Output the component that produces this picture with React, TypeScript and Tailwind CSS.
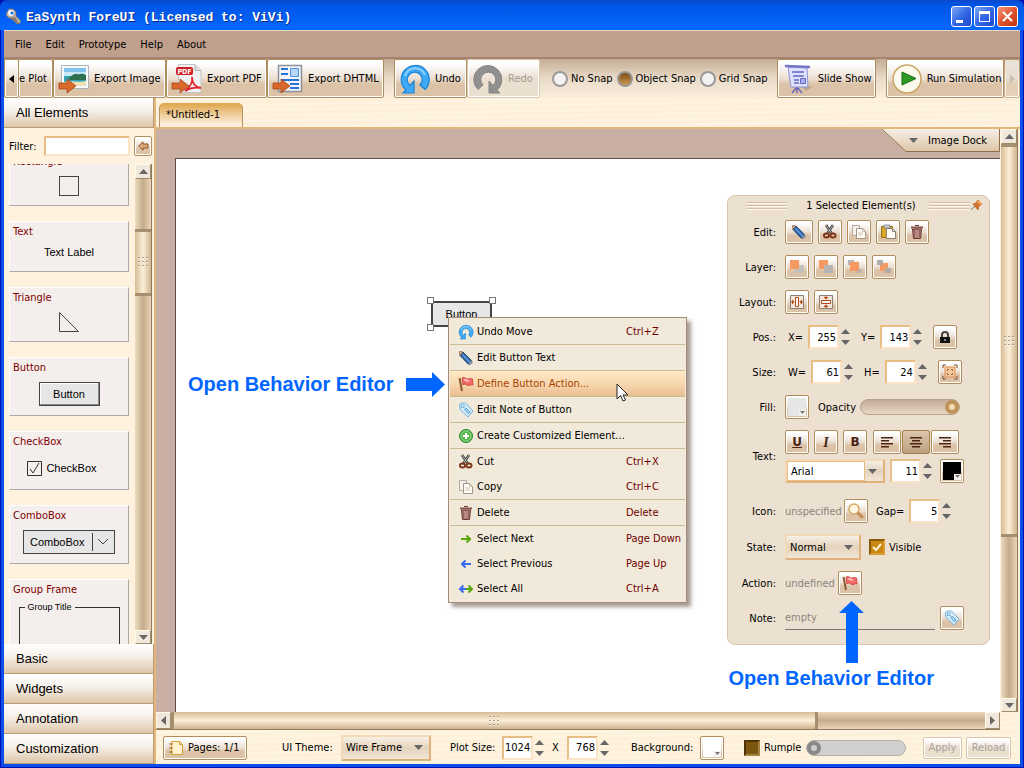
import { ReactNode } from 'react';
import clsx from 'clsx';

const WOOD =
    'bg-[#fdf1dc] bg-[repeating-linear-gradient(179deg,#fdf0d9_0px,#fff5e4_3px,#fcefd6_5px,#fff4e2_9px,#fdf0d9_11px)]';
const RAISED =
    'border border-[#b08d5c] rounded-[2px] shadow-[inset_0_0_0_1px_#fff] bg-linear-to-b from-white from-10% via-[#ecdfd2] via-50% to-[#dcc3a7] to-65%';
const FIELD =
    'bg-white border-2 border-[#e8bd86] border-r-[#fbe3c8] border-b-[#fbe3c8] outline-none text-right text-[11px] text-black';

export default function App() {
    return (
        <div className="h-screen flex flex-col overflow-hidden bg-[#0010b4] font-['DejaVu_Sans_Condensed','DejaVu_Sans',sans-serif] text-[11px] leading-[15px] text-black whitespace-nowrap select-none">
            <TitleBar />
            <div className="flex-1 min-h-0 flex flex-col mx-px mb-px border-[3px] border-t-0 border-[#0a50e8]">
                <MenuBar />
                <ToolBar />
                <div className="flex-1 min-h-0 flex">
                    <SideBar />
                    <main className="flex-1 min-w-0 flex flex-col">
                        <TabRow />
                        <Workspace />
                        <StatusBar />
                    </main>
                </div>
            </div>
        </div>
    );
}

function TitleBar() {
    return (
        <header className="h-[30px] shrink-0 flex items-center pl-[6px] pr-[6px] pt-[2px] rounded-t-[7px] bg-linear-to-b from-[#0a48c8] via-[#0055e5] via-15% to-[#0468ff]">
            <svg width="17" height="17" viewBox="0 0 17 17">
                <path d="M1 4 L3 1 L7 1 L10 4 L10 8 L15 13 L13 16 L11 16 L6 10 L3 10 L0 7 Z" fill="#b9aca1" stroke="#7f7268" strokeWidth="0.6" />
                <path d="M4 10 L11 16 L13 16 L9 9 Z" fill="#8a7a6d" />
                <circle cx="5" cy="5" r="3" fill="#f6fbff" />
                <circle cx="6" cy="5" r="1.6" fill="#1f6fdf" />
            </svg>
            <h1 className="ml-[3px] pt-[2px] flex-1 font-['Liberation_Mono',monospace] text-[13px] font-bold text-white [text-shadow:1px_1px_0_#0a2a8c]">
                EaSynth ForeUI (Licensed to: ViVi)
            </h1>
            <div className="flex gap-[2px]">
                <WindowButton label="Minimize">
                    <path d="M5 14h7v3h-7z" fill="#fff" />
                </WindowButton>
                <WindowButton label="Maximize">
                    <path d="M5 5h11v11H5z M6 8v7h9V8z" fill="#fff" fillRule="evenodd" />
                </WindowButton>
                <WindowButton label="Close" danger>
                    <path d="M6 6l9 9M15 6l-9 9" stroke="#fff" strokeWidth="2.2" />
                </WindowButton>
            </div>
        </header>
    );
}

function WindowButton({ label, danger, children }: { label: string; danger?: boolean; children: ReactNode }) {
    return (
        <button
            aria-label={label}
            className={clsx(
                'size-[21px] border border-white rounded-[3px] bg-linear-to-br',
                danger ? 'from-[#f0997c] via-[#e0522c] to-[#c03410]' : 'from-[#7ea6f4] via-[#3468e6] to-[#1c48d0]',
            )}
        >
            <svg width="19" height="19" viewBox="1 1 19 19">
                {children}
            </svg>
        </button>
    );
}

function MenuBar() {
    return (
        <nav className="h-[29px] shrink-0 flex items-center gap-[14px] pl-[11px] bg-[#c0a08c] border-t border-t-[#e9d6c8] border-b-2 border-b-[#a48370]">
            {['File', 'Edit', 'Prototype', 'Help', 'About'].map((name) => (
                <button key={name}>{name}</button>
            ))}
        </nav>
    );
}

function ToolBar() {
    return (
        <div className="h-[39px] shrink-0 flex items-stretch bg-linear-to-b from-[#c5ad94] via-[#e9dbc9] via-50% to-[#fbeedb]">
            <button aria-label="Scroll tools left" className={clsx(RAISED, 'w-[15px] flex items-center justify-center')}>
                <svg width="5" height="8">
                    <path d="M5 0v8L0 4z" />
                </svg>
            </button>
            <button className={clsx(RAISED, 'w-[34px] border-l-0 text-left')}>e Plot</button>
            <ToolButton label="Export Image" width="w-[113px]">
                <ExportImageIcon />
            </ToolButton>
            <ToolButton label="Export PDF" width="w-[101px]">
                <ExportPdfIcon />
            </ToolButton>
            <ToolButton label="Export DHTML" width="w-[117px]">
                <ExportHtmlIcon />
            </ToolButton>
            <div className="w-[10px]" />
            <ToolButton label="Undo" width="w-[73px]">
                <UndoIcon size={32} />
            </ToolButton>
            <ToolButton label="Redo" width="w-[73px]" disabled>
                <RedoIcon />
            </ToolButton>
            <fieldset className="flex items-center gap-[4px] pl-[12px]">
                <Snap label="No Snap" />
                <Snap label="Object Snap" checked />
                <Snap label="Grid Snap" />
            </fieldset>
            <div className="flex-1 max-w-[9px]" />
            <ToolButton label="Slide Show" width="w-[99px]">
                <SlideIcon />
            </ToolButton>
            <div className="w-[10px]" />
            <ToolButton label="Run Simulation" width="w-[118px]">
                <RunIcon />
            </ToolButton>
            <button aria-label="Scroll tools right" className={clsx(RAISED, 'flex-1 min-w-[14px] flex items-center justify-center opacity-60')}>
                <svg width="5" height="8" className="ml-[2px]">
                    <path d="M0 0v8l5-4z" fill="#aaa" />
                </svg>
            </button>
        </div>
    );
}

type ToolButtonProps = { label: string; width: string; disabled?: boolean; children: ReactNode };

function ToolButton({ label, width, disabled, children }: ToolButtonProps) {
    return (
        <button
            disabled={disabled}
            className={clsx(RAISED, width, 'shrink-0 flex items-center gap-[4px] pl-[4px]', disabled && 'text-[#a49c94] border-[#dcc8ae] to-[#ebdfcf]')}
        >
            {children}
            {label}
        </button>
    );
}

function Snap({ label, checked }: { label: string; checked?: boolean }) {
    return (
        <label className="flex items-center gap-[3px]">
            <input
                type="radio"
                name="snap"
                defaultChecked={checked}
                className="appearance-none size-[16px] rounded-full border-2 border-[#999] bg-[#f4f2f0] checked:bg-linear-to-b checked:from-[#7b4d13] checked:to-[#d09a4c]"
            />
            {label}
        </label>
    );
}

/* ---------- left column ---------- */

function SideBar() {
    return (
        <aside className="w-[152px] shrink-0 flex flex-col bg-[#fef1de] border-r-2 border-[#e3b77b]">
            <Accordion label="All Elements" />
            <div className="flex items-center h-[36px] pl-[5px] pr-[2px] shrink-0">
                <label htmlFor="filter" className="w-[35px]">
                    Filter:
                </label>
                <input id="filter" className={clsx(FIELD, 'flex-1 min-w-0 h-[20px]')} />
                <button aria-label="Clear filter" className={clsx(RAISED, 'ml-[4px] w-[18px] h-[20px] flex items-center justify-center')}>
                    <svg width="11" height="10" viewBox="0 0 11 10">
                        <path d="M.6 5 5 .8V3h5v4H5v2.200z" fill="#d9a878" stroke="#94552a" />
                    </svg>
                </button>
            </div>
            <div className="flex-1 min-h-0 flex">
                <div className="flex-1 min-w-0 overflow-hidden pl-[5px]">
                    <div className="-mt-[13px] flex flex-col gap-[15px]">
                        <Element name="Rectangle" height="h-[55px]">
                            <div className="size-[20px] border border-[#444]" />
                        </Element>
                        <Element name="Text" height="h-[51px]">
                            <span className="pb-[4px]">Text Label</span>
                        </Element>
                        <Element name="Triangle" height="h-[55px]">
                            <svg width="20" height="20">
                                <path d="M.5.5v19h19z" fill="none" stroke="#444" />
                            </svg>
                        </Element>
                        <Element name="Button" height="h-[59px]">
                            <span className="w-[61px] h-[24px] flex items-center justify-center bg-[#e6e6e6] border border-[#444] shadow-[inset_-1px_-1px_0_#888,inset_1px_1px_0_#fff]">
                                Button
                            </span>
                        </Element>
                        <Element name="CheckBox" height="h-[59px]">
                            <span className="flex items-center gap-[4px] pr-[14px]">
                                <svg width="15" height="15">
                                    <path d="M.5.5h14v14H.5z M3 8l3 4 6-10" fill="none" stroke="#333" />
                                </svg>
                                CheckBox
                            </span>
                        </Element>
                        <Element name="ComboBox" height="h-[59px]">
                            <span className="w-[92px] h-[24px] flex items-center bg-[#e6e6e6] border border-[#444] pl-[6px]">
                                ComboBox
                                <svg width="22" height="18" className="ml-auto">
                                    <path d="M.5 0v18M6 6l5 5 5-5" fill="none" stroke="#444" />
                                </svg>
                            </span>
                        </Element>
                        <Element name="Group Frame" height="h-[90px]">
                            <fieldset className="w-[101px] h-[70px] border border-[#333] pl-[5px] mt-[4px] text-[9px]">
                                <legend className="px-[3px] leading-[12px]">Group Title</legend>
                            </fieldset>
                        </Element>
                    </div>
                </div>
                <div className="w-[6px]" />
                <VScroll before="h-[11%]" thumb="h-[15%]" />
                <div className="w-[2px]" />
            </div>
            {['Basic', 'Widgets', 'Annotation', 'Customization'].map((name) => (
                <Accordion key={name} label={name} />
            ))}
        </aside>
    );
}

function Accordion({ label }: { label: string }) {
    return (
        <button className="h-[30px] shrink-0 pl-[12px] text-left font-['Liberation_Sans',sans-serif] text-[13px] bg-linear-to-b from-white via-[#f8f2ec] via-40% to-[#dec6ab] border-b border-r border-[#b99c72]">
            {label}
        </button>
    );
}

function Element({ name, height, children }: { name: string; height: string; children: ReactNode }) {
    return (
        <div className={clsx(height, 'shrink-0 flex flex-col bg-[#f4efed] border border-white border-r-[#aaa] border-b-[#aaa] px-[3px] pt-[2px]')}>
            <span className="text-[#800000]">{name}</span>
            <div className="flex-1 flex items-center justify-center pb-[2px] font-['Liberation_Sans',sans-serif]">{children}</div>
        </div>
    );
}

/* ---------- scroll bars ---------- */

function Grip({ className }: { className?: string }) {
    return (
        <svg width="11" height="10" className={className}>
            {[0, 4, 8].map((x) =>
                [0, 4, 8].map((y) => (
                    <g key={`${x}-${y}`}>
                        <rect x={x + 1} y={y + 1} width="1" height="1" fill="#fff" />
                        <rect x={x} y={y} width="2" height="1" fill="#a89c90" />
                    </g>
                )),
            )}
        </svg>
    );
}

function Tri({ dir }: { dir: 'up' | 'down' | 'left' | 'right' }) {
    const shapes = { up: 'M0 5h9L4.500 0z', down: 'M0 0h9L4.500 5z', left: 'M5 0v9L0 4.500z', right: 'M0 0v9l5-4.500z' };
    const flat = dir === 'up' || dir === 'down';
    return (
        <svg width={flat ? 9 : 5} height={flat ? 5 : 9}>
            <path d={shapes[dir]} fill="#666" />
        </svg>
    );
}

const CAP = 'bg-[#f0e8da] border border-[#fffbe8] border-b-[#a08a68] border-r-[#a08a68] flex items-center justify-center shrink-0';

function VScroll({ before, thumb }: { before?: string; thumb: string }) {
    return (
        <div className="w-[17px] shrink-0 flex flex-col border-r border-[#8d7a60]">
            <button aria-label="Scroll up" className={clsx(CAP, 'h-[15px]')}>
                <Tri dir="up" />
            </button>
            <div className="flex-1 min-h-0 bg-linear-to-r from-[#ecdcc0] via-[#c5ab8a] to-[#ead5b8]">
                {before && <div className={before} />}
                <div
                    className={clsx(
                        thumb,
                        'flex items-center justify-center border-y-[3px] border-[#a58f6e] bg-linear-to-r from-[#d8bc96] via-[#faefd8] to-[#d2b48e]',
                    )}
                >
                    <Grip />
                </div>
            </div>
            <button aria-label="Scroll down" className={clsx(CAP, 'h-[14px]')}>
                <Tri dir="down" />
            </button>
        </div>
    );
}

function HScroll() {
    return (
        <div className="h-[18px] flex border-b border-[#8d7a60]">
            <button aria-label="Scroll left" className={clsx(CAP, 'w-[15px]')}>
                <Tri dir="left" />
            </button>
            <div className="flex-1 bg-linear-to-b from-[#ecd6b8] via-[#c5ab8a] to-[#ead5b8]">
                <div className="w-[79.5%] h-full flex items-center justify-center border-x-[3px] border-[#a58f6e] bg-linear-to-b from-[#d8bc96] via-[#faefd8] to-[#d2b48e]">
                    <Grip />
                </div>
            </div>
            <button aria-label="Scroll right" className={clsx(CAP, 'w-[15px]')}>
                <Tri dir="right" />
            </button>
        </div>
    );
}

/* ---------- work area ---------- */

function TabRow() {
    return (
        <div className={clsx(WOOD, 'h-[31px] shrink-0 flex items-end pl-[3px] border-b-2 border-[#e3b77b]')}>
            <button className="w-[84px] h-[24px] pl-[6px] pb-[2px] text-left rounded-t-[5px] border border-b-0 border-[#b99060] border-t-[#e0a850] bg-linear-to-b from-[#dfa84e] to-[#fdf0dc] to-90%">
                *Untitled-1
            </button>
        </div>
    );
}

function Workspace() {
    return (
        <div className={clsx(WOOD, 'flex-1 min-h-0 flex')}>
            <div className="flex-1 min-w-0 flex flex-col">
                <div className="relative flex-1 min-h-0 bg-[#c9afa3] pl-[19px] pt-[29px] overflow-hidden">
                    <div className="h-full bg-white border-l border-t border-[#5b4a45]" />
                    <button className="absolute top-0 right-0 w-[119px] h-[23px] flex items-center">
                        <svg width="119" height="23" className="absolute inset-0">
                            <defs>
                                <linearGradient id="dock" x2="0" y2="1">
                                    <stop offset="0" stopColor="#f6efe6" />
                                    <stop offset="1" stopColor="#dcc3a4" />
                                </linearGradient>
                            </defs>
                            <path d="M0 0h119v23H25z" fill="url(#dock)" />
                            <path d="M1 0l24 22.500h93.500V0" fill="none" stroke="#8f6f4a" />
                        </svg>
                        <span className="relative flex items-center gap-[10px] pl-[28px]">
                            <Tri dir="down" />
                            Image Dock
                        </span>
                    </button>
                    <Selection />
                    <ContextMenu />
                    <Inspector />
                    <Callouts />
                </div>
                <HScroll />
            </div>
            <div className="flex flex-col pl-px pr-[2px] pb-[18px]">
                <div className="flex-1 min-h-0 flex">
                    <VScroll thumb="h-[71%]" />
                </div>
            </div>
        </div>
    );
}

function Selection() {
    const handle = 'absolute size-[7px] bg-white border border-[#777]';
    return (
        <div className="absolute left-[275px] top-[172px] w-[61px] h-[26px] bg-[#e6e6e6] border-2 border-[#444] flex items-center justify-center font-['Liberation_Sans',sans-serif]">
            Button
            <i className={clsx(handle, '-left-[6px] -top-[6px]')} />
            <i className={clsx(handle, '-right-[6px] -top-[6px]')} />
            <i className={clsx(handle, '-left-[6px] -bottom-[6px]')} />
        </div>
    );
}

type MenuItem = { icon: ReactNode; label: string; keys?: string; active?: boolean };

const menuGroups: MenuItem[][] = [
    [{ icon: <UndoIcon size={16} />, label: 'Undo Move', keys: 'Ctrl+Z' }],
    [{ icon: <PencilIcon />, label: 'Edit Button Text' }],
    [{ icon: <FlagIcon />, label: 'Define Button Action...', active: true }],
    [{ icon: <TagIcon />, label: 'Edit Note of Button' }],
    [{ icon: <PlusIcon />, label: 'Create Customized Element...' }],
    [
        { icon: <CutIcon />, label: 'Cut', keys: 'Ctrl+X' },
        { icon: <CopyIcon />, label: 'Copy', keys: 'Ctrl+C' },
    ],
    [{ icon: <TrashIcon />, label: 'Delete', keys: 'Delete' }],
    [
        { icon: <ArrowIcon right />, label: 'Select Next', keys: 'Page Down' },
        { icon: <ArrowIcon left />, label: 'Select Previous', keys: 'Page Up' },
        { icon: <ArrowIcon left right />, label: 'Select All', keys: 'Ctrl+A' },
    ],
];

function ContextMenu() {
    return (
        <div role="menu" className="absolute left-[292px] top-[188px] w-[239px] bg-[#f1e9d9] border border-[#a48c78] p-px shadow-[4px_4px_4px_rgba(90,70,60,0.55)]">
            {menuGroups.map((group, i) => (
                <div key={i} className="border-b border-[#cdbb96] last:border-b-0">
                    {group.map(({ icon, label, keys, active }) => (
                        <button
                            key={label}
                            role="menuitem"
                            className={clsx(
                                'w-full h-[25px] flex items-center pl-[8px] text-left',
                                active && 'text-[#a84300] bg-linear-to-b from-[#ffe9c4] via-[#f8d8b0] to-[#ebbd92]',
                            )}
                        >
                            <span className="w-[19px]">{icon}</span>
                            <span className="w-[149px]">{label}</span>
                            <span className="text-[#700000]">{keys}</span>
                        </button>
                    ))}
                </div>
            ))}
        </div>
    );
}

/* ---------- inspector panel ---------- */

function Row({ label, className, children }: { label: string; className?: string; children: ReactNode }) {
    return (
        <div className={clsx('flex items-center gap-[9px]', className)}>
            <span className="w-[48px] text-right shrink-0">{label}</span>
            <div className="flex-1 min-h-[24px] flex items-center">{children}</div>
        </div>
    );
}

function IconButton({ label, wide, active, children }: { label: string; wide?: boolean; active?: boolean; children: ReactNode }) {
    return (
        <button
            aria-label={label}
            className={clsx(
                'h-[24px] shrink-0 flex items-center justify-center',
                wide ? 'w-[28px]' : 'w-[24px]',
                active ? 'border border-[#a5814f] rounded-[2px] bg-linear-to-b from-[#dcc6ae] to-[#bd9f80]' : RAISED,
            )}
        >
            {children}
        </button>
    );
}

function Spin({ label, name, value, gap }: { label?: string; name: string; value: string; gap: string }) {
    return (
        <div className="flex items-center">
            <label className={clsx('flex items-center', gap)}>
                {label}
                <input aria-label={name} defaultValue={value} className={clsx(FIELD, 'w-[31px] h-[24px] px-px')} />
            </label>
            <span className="flex flex-col gap-[6px] ml-[2px]">
                <button aria-label={`${name} up`}>
                    <Tri dir="up" />
                </button>
                <button aria-label={`${name} down`}>
                    <Tri dir="down" />
                </button>
            </span>
        </div>
    );
}

function Combo({ name, value, className, editable }: { name: string; value: string; className: string; editable?: boolean }) {
    return (
        <div className={clsx('relative border-2 border-[#f3d9b6] border-r-[#dfb27a] border-b-[#dfb27a] bg-linear-to-b from-[#f7f0e6] via-[#e4d3bc] via-50% to-[#f1e6d6]', className)}>
            <select
                aria-label={name}
                className={clsx('appearance-none outline-none h-full pl-[3px]', editable ? 'w-[78px] bg-white border border-[#e8bd86]' : 'w-full')}
            >
                <option>{value}</option>
            </select>
            <span className="absolute right-[6px] top-0 bottom-0 flex items-center pointer-events-none">
                <Tri dir="down" />
            </span>
        </div>
    );
}

function Swatch({ label, color }: { label: string; color: string }) {
    return (
        <IconButton label={label}>
            <span className={clsx('size-[18px] flex items-end justify-end', color)}>
                <svg width="7" height="6">
                    <path d="M0 0h7v6H0z" fill="#f6f1ea" />
                    <path d="M1 1h5L3.500 4z" fill="#777" />
                </svg>
            </span>
        </IconButton>
    );
}

function Ridges() {
    return (
        <span className="w-[41px] flex flex-col gap-[2px]">
            <i className="h-px bg-[#d6bfa0] shadow-[0_1px_0_#fff8ee]" />
            <i className="h-px bg-[#d6bfa0] shadow-[0_1px_0_#fff8ee]" />
            <i className="h-px bg-[#d6bfa0] shadow-[0_1px_0_#fff8ee]" />
        </span>
    );
}

function Align({ side }: { side: 'left' | 'center' | 'right' }) {
    const x = { left: [0, 0, 0, 0], center: [0, 2, 0, 2], right: [0, 4, 0, 4] }[side];
    return (
        <svg width="12" height="11">
            {[12, 8, 12, 8].map((w, i) => (
                <rect key={i} x={x[i]} y={i * 3} width={w} height="1.500" fill="#4b2412" />
            ))}
        </svg>
    );
}

function Inspector() {
    return (
        <section className="absolute right-[10px] top-[66px] w-[263px] h-[450px] rounded-[8px] bg-[#ece1d1] border border-[#dac5aa]">
            <header className="h-[18px] mb-[6px] flex items-center justify-between pl-[18px] pr-[6px]">
                <Ridges />
                <span className="ml-[6px]">1 Selected Element(s)</span>
                <span className="flex items-center">
                    <Ridges />
                    <svg width="13" height="13" viewBox="0 0 13 13">
                        <path d="M1 11l4-4" stroke="#777" />
                        <path d="M3 5l3-1 2-3 4 4-3 2-1 4z" fill="#d9742c" stroke="#a5501a" strokeWidth=".6" />
                        <path d="M7 3l2-2 3 4-2 1z" fill="#f2a55c" />
                    </svg>
                </span>
            </header>
            <div className="flex flex-col gap-[11px]">
                <Row label="Edit:">
                    <div className="flex gap-[5px]">
                        <IconButton label="Edit text" wide>
                            <PencilIcon />
                        </IconButton>
                        <IconButton label="Cut">
                            <CutIcon />
                        </IconButton>
                        <IconButton label="Copy">
                            <CopyIcon />
                        </IconButton>
                        <IconButton label="Paste">
                            <PasteIcon />
                        </IconButton>
                        <IconButton label="Delete">
                            <TrashIcon />
                        </IconButton>
                    </div>
                </Row>
                <Row label="Layer:">
                    <div className="flex gap-[5px]">
                        {([0, 1, 2, 3] as const).map((kind) => (
                            <IconButton key={kind} label={['To front', 'To back', 'Forward', 'Backward'][kind]}>
                                <LayerIcon kind={kind} />
                            </IconButton>
                        ))}
                    </div>
                </Row>
                <Row label="Layout:">
                    <div className="flex gap-[5px]">
                        <IconButton label="Center horizontally">
                            <LayoutIcon />
                        </IconButton>
                        <IconButton label="Center vertically">
                            <LayoutIcon turned />
                        </IconButton>
                    </div>
                </Row>
                <Row label="Pos.:">
                    <div className="flex items-center gap-[11px] pl-[3px]">
                        <Spin label="X=" name="X" value="255" gap="gap-[5px]" />
                        <Spin label="Y=" name="Y" value="143" gap="gap-[5px]" />
                        <IconButton label="Lock">
                            <svg width="12" height="13">
                                <path d="M3 6V4a3 3 0 0 1 6 0v2" fill="none" stroke="#444" strokeWidth="2" />
                                <rect x="1" y="6" width="10" height="6" fill="#111" />
                                <rect x="5" y="8" width="2" height="2" fill="#888" />
                            </svg>
                        </IconButton>
                    </div>
                </Row>
                <Row label="Size:">
                    <div className="flex items-center gap-[11px] pl-[3px]">
                        <Spin label="W=" name="Width" value="61" gap="gap-[5px]" />
                        <Spin label="H=" name="Height" value="24" gap="gap-[5px]" />
                        <IconButton label="Fit size">
                            <svg width="16" height="16">
                                <path d="M3 3h10v10H3z" fill="#f3c9a0" stroke="#dd8f55" />
                                <path d="M1 4V1h3M12 1h3v3M15 12v3h-3M4 15H1v-3" fill="none" stroke="#7b4a2c" />
                                <path d="M5.500 7V5.500H7M9 5.500h1.500V7M10.500 9v1.500H9M7 10.500H5.500V9" fill="none" stroke="#b0602c" />
                            </svg>
                        </IconButton>
                    </div>
                </Row>
                <Row label="Fill:">
                    <Swatch label="Fill colour" color="bg-[#e6e6e6]" />
                    <label className="flex items-center gap-[4px] ml-[9px]">
                        Opacity
                        <input
                            type="range"
                            defaultValue={100}
                            className="appearance-none w-[100px] h-[16px] rounded-full bg-linear-to-b from-[#c3aa96] to-[#e6d8c6] border border-[#b7a18d] [&::-webkit-slider-thumb]:appearance-none [&::-webkit-slider-thumb]:size-[14px] [&::-webkit-slider-thumb]:rounded-full [&::-webkit-slider-thumb]:border-[4px] [&::-webkit-slider-thumb]:border-[#bd935a] [&::-webkit-slider-thumb]:bg-[#f3dcae]"
                        />
                    </label>
                </Row>
                <Row label="Text:">
                    <div className="flex flex-col gap-[5px]">
                        <div className="flex gap-[5px] text-[#4b2412] font-['DejaVu_Sans',sans-serif] text-[12px] font-bold">
                            <IconButton label="Underline">
                                <u>U</u>
                            </IconButton>
                            <IconButton label="Italic">
                                <i className="font-['Liberation_Serif',serif] text-[14px]">I</i>
                            </IconButton>
                            <IconButton label="Bold">B</IconButton>
                            <div className="flex gap-px ml-px">
                                <IconButton label="Align left" wide>
                                    <Align side="left" />
                                </IconButton>
                                <IconButton label="Align center" wide active>
                                    <Align side="center" />
                                </IconButton>
                                <IconButton label="Align right" wide>
                                    <Align side="right" />
                                </IconButton>
                            </div>
                        </div>
                        <div className="flex items-center">
                            <Combo name="Font" value="Arial" className="w-[100px] h-[24px] mr-[5px]" editable />
                            <Spin name="Font size" value="11" gap="gap-0" />
                            <div className="w-[8px]" />
                            <Swatch label="Text colour" color="bg-black" />
                        </div>
                    </div>
                </Row>
                <Row label="Icon:" className="mt-[5px]">
                    <span className="w-[59px] text-[#8a847c]">unspecified</span>
                    <IconButton label="Pick icon">
                        <svg width="18" height="18">
                            <path d="M10 10l5 5" stroke="#c48a52" strokeWidth="3" strokeLinecap="round" />
                            <circle cx="7" cy="7" r="5" fill="#fff6e4" stroke="#d5a862" strokeWidth="1.500" />
                        </svg>
                    </IconButton>
                    <div className="w-[8px]" />
                    <Spin label="Gap=" name="Gap" value="5" gap="gap-[5px]" />
                </Row>
                <Row label="State:">
                    <Combo name="State" value="Normal" className="w-[76px] h-[26px]" />
                    <label className="flex items-center gap-[4px] ml-[8px]">
                        <span className="relative flex">
                            <input type="checkbox" defaultChecked className="appearance-none size-[16px] bg-[#c98714] border-2 border-[#8a5a08] border-r-[#d99c30] border-b-[#d99c30]" />
                            <svg width="16" height="16" className="absolute inset-0 pointer-events-none">
                                <path d="M4 8l3 3 5-6" fill="none" stroke="#fff3d0" strokeWidth="2" />
                            </svg>
                        </span>
                        Visible
                    </label>
                </Row>
                <Row label="Action:">
                    <span className="w-[53px] text-[#8a847c]">undefined</span>
                    <IconButton label="Define action">
                        <FlagIcon />
                    </IconButton>
                </Row>
                <Row label="Note:">
                    <input aria-label="Note" placeholder="empty" className="w-[150px] h-[24px] mr-[5px] bg-transparent border-b border-[#777] outline-none placeholder:text-[#8a847c]" />
                    <IconButton label="Edit note">
                        <TagIcon />
                    </IconButton>
                </Row>
            </div>
        </section>
    );
}

function Callouts() {
    const text =
        "absolute font-['Liberation_Sans_Narrow','Liberation_Sans',sans-serif] font-bold text-[20px] leading-[28px] text-[#0066ff]";
    return (
        <>
            <p className={clsx(text, 'left-[32px] top-[241px]')}>Open Behavior Editor</p>
            <svg width="40" height="26" className="absolute left-[250px] top-[243px]">
                <path d="M0 6h26V0l13 12.500L26 25v-6H0z" fill="#0066ff" />
            </svg>
            <svg width="26" height="63" className="absolute right-[135px] top-[472px]">
                <path d="M7 62V12H0L12.500 0 25 12h-6v50z" fill="#0066ff" />
            </svg>
            <p className={clsx(text, 'right-[66px] top-[535px]')}>Open Behavior Editor</p>
            <svg width="14" height="20" className="absolute left-[460px] top-[254px]">
                <path d="M1 1v15l3.500-3.500L7 18l2.500-1L7 12h5z" fill="#fff" stroke="#222" />
            </svg>
        </>
    );
}

/* ---------- bottom bar ---------- */

function StatusBar() {
    return (
        <footer className={clsx(WOOD, 'h-[34px] shrink-0 flex items-center pl-[7px] pr-[9px] pt-px')}>
            <button className={clsx(RAISED, 'w-[84px] h-[24px] flex items-center gap-[4px] pl-[4px] mr-[35px]')}>
                <svg width="16" height="16">
                    <path d="M3.500 1.500h8l3 3v10h-11z" fill="#fff2cd" stroke="#d3a03c" />
                    <path d="M11.500 1.500v3h3" fill="none" stroke="#d3a03c" />
                    <path d="M1 4h4M1 8h4M1 12h4" stroke="#9c6a28" />
                </svg>
                Pages: 1/1
            </button>
            <span className="w-[59px]">UI Theme:</span>
            <Combo name="UI theme" value="Wire Frame" className="w-[90px] h-[26px] mr-[19px]" />
            <span className="w-[52px]">Plot Size:</span>
            <Spin name="Plot width" value="1024" gap="gap-0" />
            <span className="w-[23px] text-center">X</span>
            <Spin name="Plot height" value="768" gap="gap-0" />
            <span className="ml-[22px] w-[69px]">Background:</span>
            <Swatch label="Background colour" color="bg-white" />
            <label className="flex items-center gap-[4px] ml-[20px]">
                <input type="checkbox" className="appearance-none size-[16px] bg-[#7d5610] border-2 border-[#4e3404] border-r-[#a58344] border-b-[#a58344]" />
                Rumple
            </label>
            <input
                aria-label="Rumple amount"
                type="range"
                defaultValue={0}
                className="ml-[5px] appearance-none w-[100px] h-[16px] rounded-full bg-[#d2d0cf] border border-[#b3b0ac] [&::-webkit-slider-thumb]:appearance-none [&::-webkit-slider-thumb]:size-[14px] [&::-webkit-slider-thumb]:rounded-full [&::-webkit-slider-thumb]:border-[4px] [&::-webkit-slider-thumb]:border-[#888] [&::-webkit-slider-thumb]:bg-[#ccc]"
            />
            <div className="ml-auto flex gap-[4px] text-[#a9a29a]">
                <button disabled className={clsx(RAISED, 'w-[39px] h-[22px] border-[#d9c6ab] to-[#ebdfcf]')}>
                    Apply
                </button>
                <button disabled className={clsx(RAISED, 'w-[45px] h-[22px] border-[#d9c6ab] to-[#ebdfcf]')}>
                    Reload
                </button>
            </div>
        </footer>
    );
}

/* ---------- icons ---------- */

function ExportArrow() {
    return <path d="M1 20h8v-4l9 7-9 7v-4H1z" fill="#d9692a" stroke="#a8481a" strokeWidth=".8" />;
}

function ExportImageIcon() {
    return (
        <svg width="32" height="32">
            <path d="M3.500 2.500h27v23h-27z" fill="#f7f9fb" stroke="#aab3bd" />
            <path d="M6 5h22v8H6z" fill="#7fc4ef" />
            <path d="M6 9h22v4H6z" fill="#c9e9f7" />
            <path d="M6 13h22v6H6z" fill="#2fa3b5" />
            <path d="M10 15c3-1 6-5 9-4s4-2 9 1v5H12z" fill="#2e6f4f" />
            <path d="M6 19c8-2 14 1 22-1v5H6z" fill="#efdfb6" />
            <ExportArrow />
        </svg>
    );
}

function ExportPdfIcon() {
    return (
        <svg width="32" height="32">
            <path d="M7.500 1.500H24l6 6v22H7.500z" fill="#f1f1f1" stroke="#c4c4c4" />
            <path d="M24 1.500v6h6" fill="#ddd" stroke="#b5b5b5" />
            <path d="M14 28c5-4 8-9 7-14 0 7 3 10 9 11-6-1-11 0-16 3z" fill="none" stroke="#e0262e" strokeWidth="1.800" />
            <rect x="5" y="4" width="17" height="8" rx="2" fill="#cf1d22" />
            <text x="13.500" y="10.500" textAnchor="middle" fontSize="7" fontWeight="bold" fill="#fff">
                PDF
            </text>
            <ExportArrow />
        </svg>
    );
}

function ExportHtmlIcon() {
    return (
        <svg width="32" height="32">
            <path d="M6.500 2.500h23v26h-23z" fill="#f3f5f9" stroke="#8b929c" strokeWidth="1.500" />
            <path d="M9 6h7M9 11h7M9 17h18M18 21h9M18 25h9" stroke="#2a71d8" strokeWidth="2" />
            <path d="M18.500 5.500h8v8h-8z" fill="#b7d6fb" stroke="#4f8fe4" />
            <ExportArrow />
        </svg>
    );
}

function UndoIcon({ size }: { size: number }) {
    return (
        <svg width={size} height={size} viewBox="0 0 32 32">
            <path
                d="M15 30 H4 L7 27 A14 14 0 1 1 26 26.500 L21 22 A7.500 7.500 0 1 0 11 22.500 L15 18z"
                fill="#3fa9f5"
                stroke="#1583d8"
                strokeWidth="1.200"
            />
            <path d="M6 13a10.500 10.500 0 0 1 20-1" fill="none" stroke="#8fd2ff" strokeWidth="2" />
        </svg>
    );
}

function RedoIcon() {
    return (
        <svg width="32" height="32" viewBox="0 0 32 32">
            <path d="M17 30h11l-3-3A14 14 0 1 0 6 26.500L11 22a7.500 7.500 0 1 1 10 .5L17 18z" fill="#909090" stroke="#848484" />
        </svg>
    );
}

function SlideIcon() {
    return (
        <svg width="32" height="32">
            <path d="M20 24l11-1-7 5z" fill="#a08c78" opacity=".6" />
            <path d="M15 24l-5 6M15 24l5 6M15 23v7" stroke="#6a63b5" strokeWidth="1.500" />
            <path d="M6 4l19 1 1 19H9z" fill="#dde1fb" stroke="#8f92d8" />
            <path d="M4 3l23 1" stroke="#7377c8" strokeWidth="2.500" strokeLinecap="round" />
            <path d="M10 9h12M11 13h11M12 17h5M12 20h5" stroke="#6268c4" strokeWidth="1.500" />
            <path d="M18.500 15.500h5v5h-5z" fill="#a9aef0" stroke="#6268c4" />
        </svg>
    );
}

function RunIcon() {
    return (
        <svg width="32" height="32" viewBox="1 1 32 32">
            <circle cx="17" cy="17" r="14" fill="#fbf8ee" stroke="#c9a763" strokeWidth="1.500" />
            <path d="M12 10v13l14-6.500z" fill="#2f9a26" stroke="#1c6a16" />
        </svg>
    );
}

function PencilIcon() {
    return (
        <svg width="16" height="16">
            <path d="M5 2l8.500 8.500c1 2-1.500 4.500-3.500 3.500L2 5.500z" fill="#2b62a5" stroke="#1c3f70" strokeWidth=".8" />
            <path d="M4.500 4.500l7 7.500" stroke="#6fa3df" strokeWidth="1.200" />
            <path d="M2 5.500L5 2 1.500 1.500z" fill="#efc79a" stroke="#503020" strokeWidth=".6" />
            <path d="M10 14l3.500-3.500 1.500 2-2.500 2.500z" fill="#8b8fa0" />
        </svg>
    );
}

function CutIcon() {
    return (
        <svg width="16" height="16">
            <path d="M4 1l6 9M11 1L5 10" stroke="#333" strokeWidth="2.400" />
            <path d="M4 1l6 9M11 1L5 10" stroke="#ddd" strokeWidth=".8" />
            <ellipse cx="4.500" cy="11.500" rx="2.600" ry="2" fill="none" stroke="#7f3517" strokeWidth="1.800" />
            <ellipse cx="11" cy="11.500" rx="2.600" ry="2" fill="none" stroke="#7f3517" strokeWidth="1.800" />
        </svg>
    );
}

function CopyIcon() {
    return (
        <svg width="16" height="16">
            <path d="M1.500 1.500h7v10h-7z" fill="#f8f3ea" stroke="#b5aa9c" />
            <path d="M5.500 4.500h6l3 3v7h-9z" fill="#fffdf6" stroke="#a0958a" />
            <path d="M11.500 4.500v3h3M7 9h5M7 11h5" fill="none" stroke="#c5b8a0" strokeWidth=".8" />
        </svg>
    );
}

function PasteIcon() {
    return (
        <svg width="16" height="16">
            <path d="M1.500 2.500h11v11h-11z" fill="#d9a72a" stroke="#96700f" />
            <path d="M4 1h6v3H4z" fill="#c7ccd4" stroke="#777" strokeWidth=".7" />
            <path d="M6.500 4.500h6l3 3v7h-9z" fill="#fffdf6" stroke="#8d8277" />
            <path d="M12.500 4.500v3h3" fill="none" stroke="#8d8277" />
        </svg>
    );
}

function TrashIcon() {
    return (
        <svg width="16" height="16">
            <path d="M3.500 5h9l-1 9.500h-7z" fill="#b17c74" stroke="#6a3a34" />
            <path d="M2 3.500h12" stroke="#8a554d" strokeWidth="2" />
            <path d="M6 1.500h4" stroke="#6a3a34" />
            <path d="M6 6v7M8 6v7M10 6v7" stroke="#7b4740" />
            <path d="M7 6v7M9 6v7" stroke="#e8c8c0" strokeWidth=".8" />
        </svg>
    );
}

function FlagIcon() {
    return (
        <svg width="16" height="16">
            <path d="M1.500 2L4 15" stroke="#8a5a2a" strokeWidth="2" />
            <path d="M4 2c3-1.500 4 1.500 6 1s3-1 4.500 0L15 9c-2-1-3 1-5 .500S7 7 5 9z" fill="#f06a6a" stroke="#d03a3a" strokeWidth=".8" />
            <path d="M6 4c2-1 3 1.500 5 1" fill="none" stroke="#ffc4c0" strokeWidth="1.800" />
        </svg>
    );
}

function TagIcon() {
    return (
        <svg width="16" height="16">
            <path d="M1.500 2.500l2-1.500h4L15 9l-5 6-8-7.500z" fill="#d4ecf8" stroke="#76b2da" />
            <path d="M6.500 7.500L8 6l4 4-1.500 2z" fill="#a4d2f0" stroke="#4c97cc" strokeWidth=".8" />
            <rect x="3.500" y="3" width="2.500" height="2.500" fill="#fff" stroke="#5fa3d2" strokeWidth=".8" />
        </svg>
    );
}

function PlusIcon() {
    return (
        <svg width="16" height="16">
            <circle cx="8" cy="8" r="6.500" fill="#57b84e" stroke="#2d8a31" />
            <circle cx="8" cy="8" r="5" fill="none" stroke="#a6dc9c" strokeWidth=".8" />
            <path d="M8 5v6M5 8h6" stroke="#fff" strokeWidth="2" />
        </svg>
    );
}

function ArrowIcon({ left, right }: { left?: boolean; right?: boolean }) {
    const both = left && right;
    return (
        <svg width="16" height="16">
            {left && <path d={both ? 'M8 8H2M5.500 4.500L2 8l3.500 3.500' : 'M13 8H4M7.500 4.500L4 8l3.500 3.500'} fill="none" stroke="#3a6cf0" strokeWidth="2" />}
            {right && <path d={both ? 'M8 8h6M10.500 4.500L14 8l-3.500 3.500' : 'M3 8h9M8.500 4.500L12 8l-3.500 3.500'} fill="none" stroke="#58a80c" strokeWidth="2" />}
        </svg>
    );
}

function LayerIcon({ kind }: { kind: 0 | 1 | 2 | 3 }) {
    const orange = '#f69a62';
    return (
        <svg width="16" height="16">
            {kind === 0 && (
                <>
                    <path d="M6 6h9v8H6z" fill="#c4c0bd" />
                    <path d="M1 1h9v9H1z" fill={orange} />
                </>
            )}
            {kind === 1 && (
                <>
                    <path d="M1 1h9v9H1z" fill={orange} />
                    <path d="M6 6h9v8H6z" fill="#b9b5b2" />
                </>
            )}
            {kind === 2 && (
                <>
                    <path d="M1 1h6v5H1zM9 10h6v4H9z" fill="#b9b5b2" />
                    <path d="M3 3h9v9H3z" fill={orange} />
                </>
            )}
            {kind === 3 && (
                <>
                    <path d="M4 4h8v8H4z" fill={orange} />
                    <path d="M1 1h6v5H1zM9 9h6v5H9z" fill="#b0acaa" />
                </>
            )}
        </svg>
    );
}

function LayoutIcon({ turned }: { turned?: boolean }) {
    return (
        <svg width="16" height="16" viewBox="0 0 16 16">
            <path d="M1.500 1.500h13v13h-13z" fill="#f3e6da" stroke="#8b8178" />
            <g transform={turned ? 'rotate(90 8 8)' : undefined}>
                <path d="M6.500 3.500h3v9h-3z" fill="#fff" stroke="#b04a12" />
                <path d="M2 8h2M12 8h2" stroke="#b04a12" />
                <path d="M3 5.500v5L5.500 8zM13 5.500v5L10.500 8z" fill="#b04a12" />
            </g>
        </svg>
    );
}
